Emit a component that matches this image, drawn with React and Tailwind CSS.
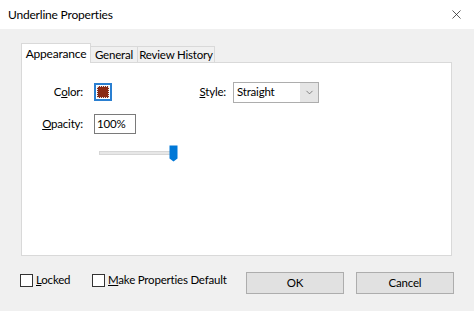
import { X, ChevronDown } from 'lucide-react';

export default function App() {
  return (
    <div
      className="w-[474px] h-[311px] bg-[#f0f0f0] flex flex-col text-[11.5px] tracking-[-0.2px] text-[#000] overflow-hidden whitespace-nowrap"
      style={{ fontFamily: 'Lato, "Noto Sans", sans-serif' }}
    >
      <div className="h-[29px] bg-white flex items-center justify-between pl-[8px] pr-[10px] shrink-0">
        <span className="leading-none text-[12px]">Underline Properties</span>
        <X className="w-[15px] h-[15px] text-[#222]" strokeWidth={1.2} />
      </div>

      <div className="px-[21px] pt-[14px] flex flex-col">
        <div className="flex items-end h-[19px]">
          <div className="w-[70px] h-[20px] bg-white border border-b-0 border-[#d9d9d9] flex items-center justify-center relative z-10 -mb-px text-[12px]">
            Appearance
          </div>
          <div className="w-[47px] h-[16px] bg-[#f0f0f0] border border-l-0 border-b-0 border-[#d9d9d9] flex items-center justify-center">
            General
          </div>
          <div className="w-[77px] h-[16px] bg-[#f0f0f0] border border-l-0 border-b-0 border-[#d9d9d9] flex items-center justify-center">
            Review History
          </div>
        </div>
        <div className="w-[431px] h-[194px] bg-white border border-[#d9d9d9] flex flex-col">
          <div className="flex items-center mt-[18px] h-[22px]">
            <span className="w-[61px] text-right">
              C<span className="underline">o</span>lor:
            </span>
            <div className="ml-[11px] w-[18px] h-[18px] border-2 border-[#2a7fd1] p-px">
              <div className="w-full h-full bg-[#8a2a14] border border-dotted border-[#dfe6ee]" />
            </div>
            <span className="w-[114px] text-right">
              <span className="underline">S</span>tyle:
            </span>
            <div className="ml-[7px] w-[86px] h-[21px] border border-[#adadad] bg-white flex items-center">
              <span className="pl-[3px] flex-1">Straight</span>
              <div className="w-[18px] h-full bg-[#e5e5e5] flex items-center justify-center">
                <ChevronDown className="w-[11px] h-[11px] text-[#555]" strokeWidth={1.5} />
              </div>
            </div>
          </div>
          <div className="flex items-center mt-[11px] h-[20px]">
            <span className="w-[61px] text-right">
              <span className="underline">O</span>pacity:
            </span>
            <div className="ml-[11px] w-[42px] h-[20px] border border-[#7a7a7a] bg-white flex items-center pl-[2px]">
              100%
            </div>
          </div>
          <div className="flex items-center mt-[10px] ml-[77px] h-[18px]">
            <div className="w-[72px] h-[4px] bg-[#e7e7e7] border border-[#d6d6d6]" />
            <svg width="9" height="17" viewBox="0 0 9 17" className="-ml-[2px]">
              <path d="M0.5 0.5 H8.5 V13.5 L4.5 16.5 L0.5 13.5 Z" fill="#0078d7" />
            </svg>
          </div>
        </div>
      </div>

      <div className="flex items-start mt-[16px] px-[20px] h-[22px]">
        <div className="flex items-center w-[72px] h-[14px] mt-px">
          <div className="w-[13px] h-[13px] border border-[#333] bg-white" />
          <span className="ml-[3px]">
            <span className="underline">L</span>ocked
          </span>
        </div>
        <div className="flex items-center h-[14px] mt-px">
          <div className="w-[13px] h-[13px] border border-[#333] bg-white" />
          <span className="ml-[3px]">
            <span className="underline">M</span>ake Properties Default
          </span>
        </div>
        <div className="ml-auto flex gap-[12px]">
          <button className="w-[98px] h-[22px] bg-[#e1e1e1] border border-[#adadad]">OK</button>
          <button className="w-[98px] h-[22px] bg-[#e1e1e1] border border-[#adadad]">Cancel</button>
        </div>
      </div>
    </div>
  );
}
